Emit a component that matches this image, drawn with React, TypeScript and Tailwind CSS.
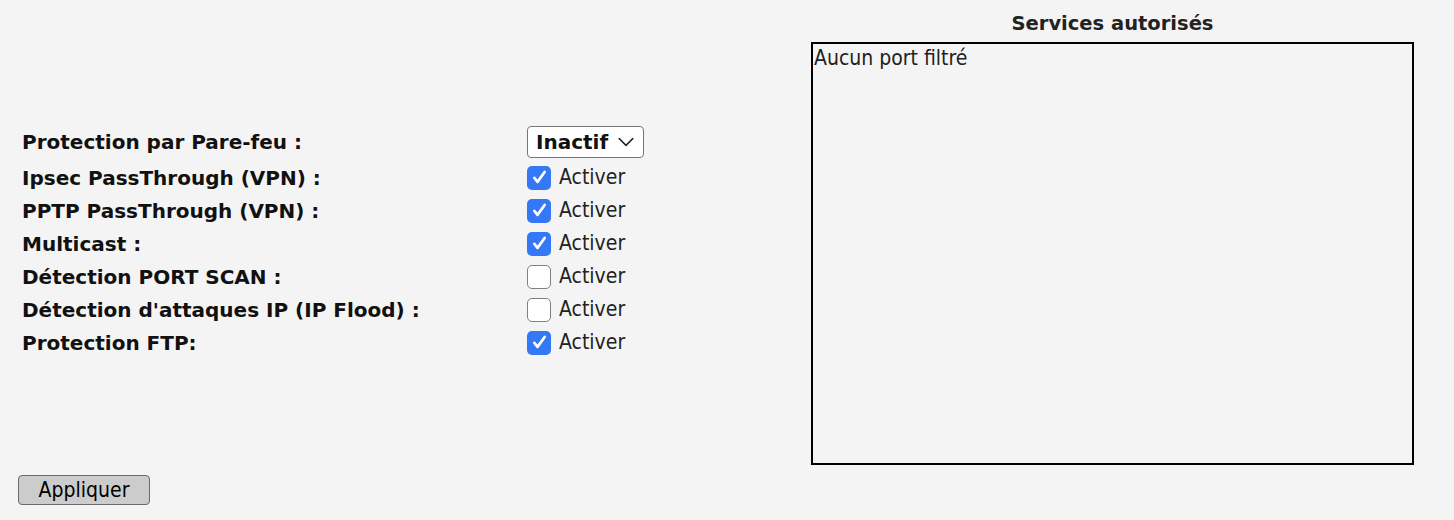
import { useState } from "react";

type Row = { label: string; checked: boolean };

const rows: Row[] = [
  { label: "Ipsec PassThrough (VPN) :", checked: true },
  { label: "PPTP PassThrough (VPN) :", checked: true },
  { label: "Multicast :", checked: true },
  { label: "Détection PORT SCAN :", checked: false },
  { label: "Détection d'attaques IP (IP Flood) :", checked: false },
  { label: "Protection FTP:", checked: true },
];

function Check({ on, onToggle }: { on: boolean; onToggle: () => void }) {
  return (
    <button
      type="button"
      onClick={onToggle}
      className={
        on
          ? "flex h-[24px] w-[24px] items-center justify-center rounded-[5px] bg-[#3478f6]"
          : "flex h-[24px] w-[24px] items-center justify-center rounded-[5px] border border-[#808080] bg-white"
      }
    >
      {on && (
        <svg viewBox="0 0 24 24" className="h-[19px] w-[19px]" fill="none">
          <path d="M5.5 12.5l4 5L18.5 5" stroke="white" strokeWidth="3.4" strokeLinecap="round" strokeLinejoin="round" />
        </svg>
      )}
    </button>
  );
}

export default function App() {
  const [checks, setChecks] = useState(rows.map((r) => r.checked));
  const bold = "font-['DejaVu_Sans',sans-serif] font-bold text-[20px]";

  return (
    <div className="min-h-screen bg-[#f4f4f4] font-['DejaVu_Sans_Condensed','DejaVu_Sans',sans-serif] text-[21px] text-[#111]">
      <div className="flex pl-[22px] pt-[10px]">
        <div className="w-[789px] pt-[115px]">
          <div className="flex h-[34px] items-center">
            <div className={`w-[505px] ${bold}`}>Protection par Pare-feu :</div>
            <div className={`flex h-[32px] items-center gap-[9px] rounded-[4px] border border-[#767676] bg-white pl-[8px] pr-[8px] ${bold}`}>
              Inactif
              <svg viewBox="0 0 16 16" className="h-[18px] w-[18px]" fill="none">
                <path d="M2 5l6 6 6-6" stroke="#222" strokeWidth="1.3" strokeLinecap="round" strokeLinejoin="round" />
              </svg>
            </div>
          </div>
          <div className="mt-[2px] flex flex-col">
            {rows.map((r, i) => (
              <div key={r.label} className="flex h-[33px] items-center">
                <div className={`w-[505px] ${bold}`}>{r.label}</div>
                <Check
                  on={checks[i]}
                  onToggle={() => setChecks((c) => c.map((v, j) => (j === i ? !v : v)))}
                />
                <span className="ml-[8px] text-[#222]">Activer</span>
              </div>
            ))}
          </div>
        </div>
        <div className="flex w-[603px] flex-col">
          <div className="h-[32px] text-center font-['DejaVu_Sans',sans-serif] text-[19.5px] font-bold leading-[28px] text-[#222]">
            Services autorisés
          </div>
          <div className="h-[423px] border-2 border-black pl-[1px] leading-[28px] text-[#222]">Aucun port filtré</div>
        </div>
      </div>
      <button className="ml-[18px] mt-[10px] h-[30px] w-[132px] rounded-[4px] border border-[#6b6b6b] bg-[#cccccc] text-[21px] leading-none text-black">
        Appliquer
      </button>
    </div>
  );
}
